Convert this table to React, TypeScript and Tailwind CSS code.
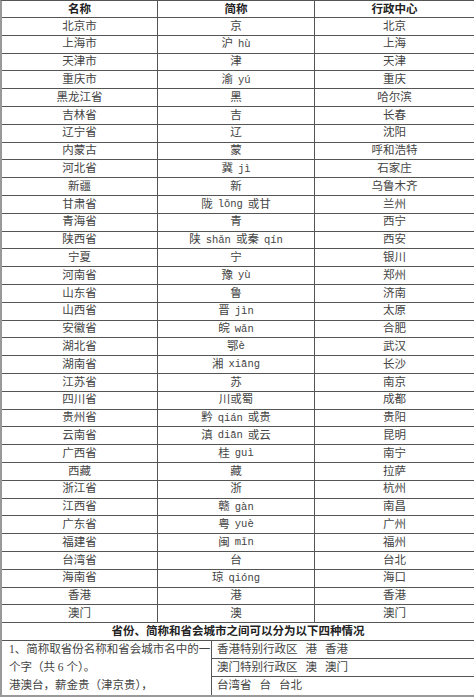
import React from "react";

type Row = [string, React.ReactNode, string];

const M = ({ children }: { children: React.ReactNode }) => (
  <span className="text-[10.5px]" style={{ fontFamily: '"Liberation Mono", monospace' }}>
    {children}
  </span>
);

const S = () => <span className="inline-block w-[5px]" />;

const rows: Row[] = [
  ["北京市", "京", "北京"],
  ["上海市", <>沪<S /><M>hù</M></>, "上海"],
  ["天津市", "津", "天津"],
  ["重庆市", <>渝<S /><M>yú</M></>, "重庆"],
  ["黑龙江省", "黑", "哈尔滨"],
  ["吉林省", "吉", "长春"],
  ["辽宁省", "辽", "沈阳"],
  ["内蒙古", "蒙", "呼和浩特"],
  ["河北省", <>冀<S /><M>jì</M></>, "石家庄"],
  ["新疆", "新", "乌鲁木齐"],
  ["甘肃省", <>陇<S /><M>lǒng</M><S />或甘</>, "兰州"],
  ["青海省", "青", "西宁"],
  ["陕西省", <>陕<S /><M>shǎn</M><S />或秦<S /><M>qín</M></>, "西安"],
  ["宁夏", "宁", "银川"],
  ["河南省", <>豫<S /><M>yù</M></>, "郑州"],
  ["山东省", "鲁", "济南"],
  ["山西省", <>晋<S /><M>jìn</M></>, "太原"],
  ["安徽省", <>皖<S /><M>wǎn</M></>, "合肥"],
  ["湖北省", <>鄂<M>è</M></>, "武汉"],
  ["湖南省", <>湘<S /><M>xiāng</M></>, "长沙"],
  ["江苏省", "苏", "南京"],
  ["四川省", "川或蜀", "成都"],
  ["贵州省", <>黔<S /><M>qián</M><S />或贵</>, "贵阳"],
  ["云南省", <>滇<S /><M>diān</M><S />或云</>, "昆明"],
  ["广西省", <>桂<S /><M>guì</M></>, "南宁"],
  ["西藏", "藏", "拉萨"],
  ["浙江省", "浙", "杭州"],
  ["江西省", <>赣<S /><M>gàn</M></>, "南昌"],
  ["广东省", <>粤<S /><M>yuè</M></>, "广州"],
  ["福建省", <>闽<S /><M>mǐn</M></>, "福州"],
  ["台湾省", "台", "台北"],
  ["海南省", <>琼<S /><M>qióng</M></>, "海口"],
  ["香港", "港", "香港"],
  ["澳门", "澳", "澳门"],
];

const W = () => <span className="inline-block w-[8px]" />;

export default function App() {
  return (
    <div
      className="w-[474px] h-[697px] bg-white text-[#444] overflow-hidden"
      style={{ fontFamily: '"Liberation Serif", "Noto Sans CJK SC", serif' }}
    >
      <div className="flex flex-col border-l-[2px] border-[#999] border-t border-t-[#555]">
        <div className="grid grid-cols-[156px_157px_159px] h-[17px] border-b border-[#555] text-[11.5px] font-bold text-[#222]">
          <div className="flex items-center justify-center border-r border-[#555]">名称</div>
          <div className="flex items-center justify-center border-r border-[#555]">简称</div>
          <div className="flex items-center justify-center">行政中心</div>
        </div>
        {rows.map((r, i) => (
          <div
            key={i}
            className="grid grid-cols-[156px_157px_159px] h-[17.8px] border-b border-[#555] text-[11.5px] leading-none"
          >
            <div className="flex items-center justify-center border-r border-[#555]">{r[0]}</div>
            <div className="flex items-center justify-center border-r border-[#555] whitespace-nowrap">{r[1]}</div>
            <div className="flex items-center justify-center">{r[2]}</div>
          </div>
        ))}
        <div className="h-[18px] flex items-center justify-center border-b border-[#555] text-[11.5px] font-bold text-[#222]">
          省份、简称和省会城市之间可以分为以下四种情况
        </div>
        <div className="grid grid-cols-[210px_262px] border-b-[2px] border-[#999] text-[11.5px]">
          <div className="border-r border-[#555] pl-[7px] flex flex-col">
            <div className="h-[18px] flex items-center whitespace-nowrap">1、简称取省份名称和省会城市名中的一</div>
            <div className="h-[18px] flex items-center whitespace-nowrap">个字（共 6 个）。</div>
            <div className="h-[18px] flex items-center whitespace-nowrap">港澳台，薪金贵（津京贵），</div>
          </div>
          <div className="flex flex-col">
            <div className="h-[18px] flex items-center pl-[5px] border-b border-[#555] whitespace-nowrap">香港特别行政区<W />港<W />香港</div>
            <div className="h-[18px] flex items-center pl-[5px] border-b border-[#555] whitespace-nowrap">澳门特别行政区<W />澳<W />澳门</div>
            <div className="h-[18px] flex items-center pl-[5px] whitespace-nowrap">台湾省<W />台<W />台北</div>
          </div>
        </div>
      </div>
    </div>
  );
}
